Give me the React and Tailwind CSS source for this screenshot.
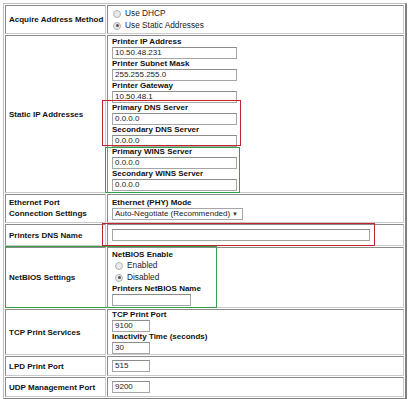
import React from 'react';

const Label = ({ children }) => (
  <div className="h-[10px] whitespace-nowrap text-[8px] font-bold leading-[10px] text-[#111]">{children}</div>
);

const Field = ({ value = '', className = 'w-[125px]' }) => (
  <div className={`h-[12px] border border-[#a6a6a6] border-t-[#8c8c8c] bg-white px-[2px] text-[8px] leading-[10px] text-[#222] ${className}`}>
    {value}
  </div>
);

const Radio = ({ checked, children }) => (
  <div className="flex h-[12px] items-center text-[8.3px] text-[#222]">
    <span className="ml-[1px] mr-[4px] flex h-[8px] w-[8px] items-center justify-center rounded-full border border-[#b4b4b4] bg-[#e9e9e9]">
      {checked && <span className="h-[3px] w-[3px] rounded-full bg-[#555]" />}
    </span>
    {children}
  </div>
);

const Row = ({ label, h, children }) => (
  <div className={`flex gap-px ${h}`}>
    <div className="flex w-[101px] items-center border border-t-[#8a8a8a] border-l-[#8a8a8a] border-r-[#c9c9c9] border-b-[#c9c9c9] pl-[3px] text-[8px] font-bold leading-[11px] text-[#111]">
      {label}
    </div>
    <div className="flex flex-1 flex-col justify-center border border-t-[#8a8a8a] border-l-[#8a8a8a] border-r-[#c9c9c9] border-b-[#c9c9c9] pl-[4px]">
      {children}
    </div>
  </div>
);

export default function App() {
  return (
    <div className="relative h-[399px] w-[409px] overflow-hidden bg-white pl-[3px] pt-[3px] font-['Liberation_Sans',Arial,sans-serif]">
      <div className="flex w-[404px] flex-col gap-px border-t border-l border-[#c0c0c0] border-r-2 border-b-2 border-r-[#808080] border-b-[#808080] p-px">
        <Row label="Acquire Address Method" h="h-[29px]">
          <Radio>Use DHCP</Radio>
          <Radio checked>Use Static Addresses</Radio>
        </Row>

        <Row label="Static IP Addresses" h="h-[158px]">
          <Label>Printer IP Address</Label>
          <Field value="10.50.48.231" />
          <Label>Printer Subnet Mask</Label>
          <Field value="255.255.255.0" />
          <Label>Printer Gateway</Label>
          <Field value="10.50.48.1" />
          <Label>Primary DNS Server</Label>
          <Field value="0.0.0.0" />
          <Label>Secondary DNS Server</Label>
          <Field value="0.0.0.0" />
          <Label>Primary WINS Server</Label>
          <Field value="0.0.0.0" />
          <Label>Secondary WINS Server</Label>
          <Field value="0.0.0.0" />
        </Row>

        <Row
          label={
            <span className="pb-[2px]">
              Ethernet Port
              <br />
              Connection Settings
            </span>
          }
          h="h-[29px]"
        >
          <Label>Ethernet (PHY) Mode</Label>
          <div className="flex h-[12px] w-[131px] items-center justify-between border border-[#a6a6a6] bg-white pl-[2px] pr-[4px] text-[8px] leading-[10px] text-[#222]">
            <span>Auto-Negotiate (Recommended)</span>
            <span className="text-[6px] text-[#333]">▼</span>
          </div>
        </Row>

        <Row label="Printers DNS Name" h="h-[22px]">
          <Field className="w-[258px]" />
        </Row>

        <Row label="NetBIOS Settings" h="h-[61px]">
          <Label>NetBIOS Enable</Label>
          <div className="pl-[2px]">
            <Radio>Enabled</Radio>
            <Radio checked>Disabled</Radio>
          </div>
          <Label>Printers NetBIOS Name</Label>
          <Field className="w-[79px]" />
        </Row>

        <Row label="TCP Print Services" h="h-[46px]">
          <Label>TCP Print Port</Label>
          <Field value="9100" className="w-[38px]" />
          <Label>Inactivity Time (seconds)</Label>
          <Field value="30" className="w-[38px]" />
        </Row>

        <Row label="LPD Print Port" h="h-[20px]">
          <Field value="515" className="w-[38px]" />
        </Row>

        <Row label="UDP Management Port" h="h-[20px]">
          <Field value="9200" className="w-[38px]" />
        </Row>
      </div>

      {/* annotation boxes drawn over the form */}
      <div className="pointer-events-none absolute left-[102px] top-[100px] h-[46px] w-[139px] border border-[#c0262d]" />
      <div className="pointer-events-none absolute left-[105px] top-[147px] h-[46px] w-[135px] border border-[#35a04b]" />
      <div className="pointer-events-none absolute left-[102px] top-[223px] h-[23px] w-[273px] border border-[#c0262d]" />
      <div className="pointer-events-none absolute left-[5px] top-[246px] h-[62px] w-[212px] border border-[#35a04b]" />
    </div>
  );
}
